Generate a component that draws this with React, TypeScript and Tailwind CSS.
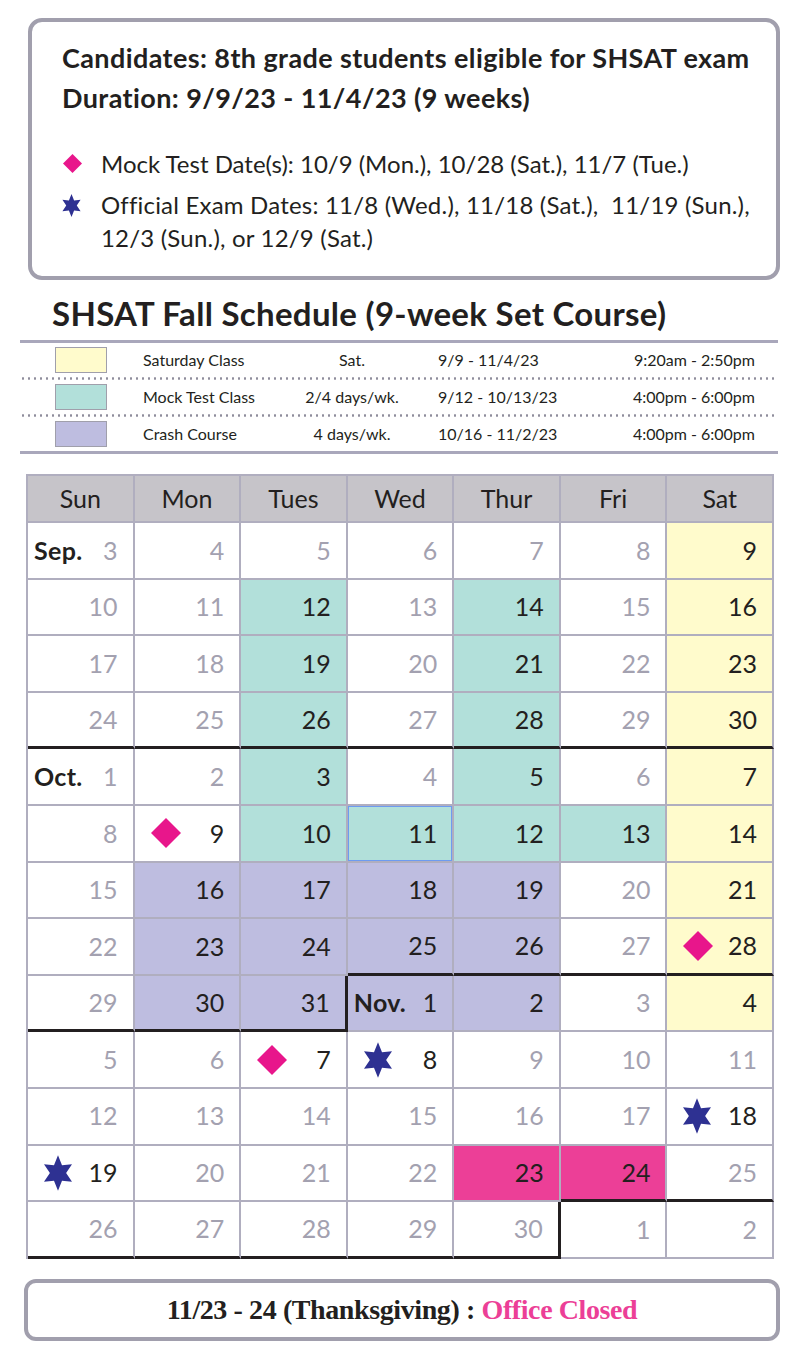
type Cell = {
  n: number;
  bg?: "y" | "t" | "l" | "p";
  dark?: boolean;
  icon?: "d" | "s";
  label?: string;
  b?: boolean;
  r?: boolean;
  blue?: boolean;
};

const bgs = {
  y: "bg-[#fffbcc]",
  t: "bg-[#b2e0da]",
  l: "bg-[#bebde0]",
  p: "bg-[#ec3f97]",
};

const rows: Cell[][] = [
  [{ n: 3, label: "Sep." }, { n: 4 }, { n: 5 }, { n: 6 }, { n: 7 }, { n: 8 }, { n: 9, bg: "y", dark: true }],
  [{ n: 10 }, { n: 11 }, { n: 12, bg: "t", dark: true }, { n: 13 }, { n: 14, bg: "t", dark: true }, { n: 15 }, { n: 16, bg: "y", dark: true }],
  [{ n: 17 }, { n: 18 }, { n: 19, bg: "t", dark: true }, { n: 20 }, { n: 21, bg: "t", dark: true }, { n: 22 }, { n: 23, bg: "y", dark: true }],
  [
    { n: 24, b: true },
    { n: 25, b: true },
    { n: 26, bg: "t", dark: true, b: true },
    { n: 27, b: true },
    { n: 28, bg: "t", dark: true, b: true },
    { n: 29, b: true },
    { n: 30, bg: "y", dark: true, b: true },
  ],
  [{ n: 1, label: "Oct." }, { n: 2 }, { n: 3, bg: "t", dark: true }, { n: 4 }, { n: 5, bg: "t", dark: true }, { n: 6 }, { n: 7, bg: "y", dark: true }],
  [
    { n: 8 },
    { n: 9, dark: true, icon: "d" },
    { n: 10, bg: "t", dark: true },
    { n: 11, bg: "t", dark: true, blue: true },
    { n: 12, bg: "t", dark: true },
    { n: 13, bg: "t", dark: true },
    { n: 14, bg: "y", dark: true },
  ],
  [{ n: 15 }, { n: 16, bg: "l", dark: true }, { n: 17, bg: "l", dark: true }, { n: 18, bg: "l", dark: true }, { n: 19, bg: "l", dark: true }, { n: 20 }, { n: 21, bg: "y", dark: true }],
  [
    { n: 22 },
    { n: 23, bg: "l", dark: true },
    { n: 24, bg: "l", dark: true },
    { n: 25, bg: "l", dark: true, b: true },
    { n: 26, bg: "l", dark: true, b: true },
    { n: 27, b: true },
    { n: 28, bg: "y", dark: true, icon: "d", b: true },
  ],
  [
    { n: 29, b: true },
    { n: 30, bg: "l", dark: true, b: true },
    { n: 31, bg: "l", dark: true, b: true, r: true },
    { n: 1, bg: "l", dark: true, label: "Nov." },
    { n: 2, bg: "l", dark: true },
    { n: 3 },
    { n: 4, bg: "y", dark: true },
  ],
  [{ n: 5 }, { n: 6 }, { n: 7, dark: true, icon: "d" }, { n: 8, dark: true, icon: "s" }, { n: 9 }, { n: 10 }, { n: 11 }],
  [{ n: 12 }, { n: 13 }, { n: 14 }, { n: 15 }, { n: 16 }, { n: 17 }, { n: 18, dark: true, icon: "s" }],
  [
    { n: 19, dark: true, icon: "s" },
    { n: 20 },
    { n: 21 },
    { n: 22 },
    { n: 23, bg: "p", dark: true },
    { n: 24, bg: "p", dark: true, b: true },
    { n: 25, b: true },
  ],
  [
    { n: 26, b: true },
    { n: 27, b: true },
    { n: 28, b: true },
    { n: 29, b: true },
    { n: 30, b: true, r: true },
    { n: 1 },
    { n: 2 },
  ],
];

const Diamond = ({ size = 30 }: { size?: number }) => (
  <svg width={size} height={size} viewBox="0 0 30 30">
    <polygon points="15,0 30,15 15,30 0,15" fill="#e8168b" />
  </svg>
);

// six point star, a bit taller than wide
const Star = ({ w = 28, h = 36 }: { w?: number; h?: number }) => (
  <svg width={w} height={h} viewBox="0 0 30 38">
    <polygon
      points="15,0 19.3,10.8 30,9.5 23.7,19 30,28.5 19.3,27.2 15,38 10.7,27.2 0,28.5 6.3,19 0,9.5 10.7,10.8"
      fill="#2e3192"
    />
  </svg>
);

const legend = [
  { color: "bg-[#fffbcc]", name: "Saturday Class", freq: "Sat.", dates: "9/9 - 11/4/23", time: "9:20am - 2:50pm" },
  { color: "bg-[#b2e0da]", name: "Mock Test Class", freq: "2/4 days/wk.", dates: "9/12 - 10/13/23", time: "4:00pm - 6:00pm" },
  { color: "bg-[#bebde0]", name: "Crash Course", freq: "4 days/wk.", dates: "10/16 - 11/2/23", time: "4:00pm - 6:00pm" },
];

export default function App() {
  return (
    <div className="w-[800px] h-[1352px] bg-white text-[#231f20] font-['Lato',sans-serif] pt-[18px]">
      {/* info box */}
      <div className="ml-[28px] w-[752px] h-[262px] border-4 border-[#a19fad] rounded-[14px] pl-[30px] pt-[16px]">
        <div className="text-[27px] font-bold leading-[40px] tracking-[0.4px]">
          Candidates: 8th grade students eligible for SHSAT exam
        </div>
        <div className="text-[27px] font-bold leading-[40px] tracking-[0.4px]">Duration: 9/9/23 - 11/4/23 (9 weeks)</div>
        <div className="mt-[29px] flex flex-col gap-[8px] text-[24px] leading-[33px]">
          <div className="flex">
            <div className="w-[39px] flex items-center pl-[1px]">
              <Diamond size={19} />
            </div>
            <div>Mock Test Date(s): 10/9 (Mon.), 10/28 (Sat.), 11/7 (Tue.)</div>
          </div>
          <div className="flex">
            <div className="w-[39px] pt-[6px]">
              <Star w={19} h={23} />
            </div>
            <div className="tracking-[0.2px]">
              Official Exam Dates: 11/8 (Wed.), 11/18 (Sat.),&nbsp; 11/19 (Sun.),
              <br />
              12/3 (Sun.), or 12/9 (Sat.)
            </div>
          </div>
        </div>
      </div>

      {/* title */}
      <div className="mt-[14px] pl-[52px] text-[33px] font-bold leading-[38px] tracking-[0.3px]">
        SHSAT Fall Schedule (9-week Set Course)
      </div>

      {/* legend */}
      <div className="mt-[8px] ml-[20px] w-[758px] border-t-[3px] border-b-[3px] border-[#a9a7bb] text-[16px] whitespace-nowrap">
        {legend.map((l, i) => (
          <div key={l.name}>
            {i > 0 && (
              <div className="h-[3px] bg-[radial-gradient(circle,#8f8d9c_1px,transparent_1.4px)] bg-[length:6px_3px]" />
            )}
            <div className="flex items-center h-[34px]">
              <div className={`shrink-0 ml-[35px] w-[52px] h-[26px] border border-[#a09fab] ${l.color}`} />
              <div className="ml-[36px] w-[160px]">{l.name}</div>
              <div className="w-[98px] text-center">{l.freq}</div>
              <div className="ml-[37px] w-[187px]">{l.dates}</div>
              <div className="w-[130px] text-right">{l.time}</div>
            </div>
          </div>
        ))}
      </div>

      {/* calendar */}
      <div className="mt-[20px] ml-[26px] w-[748px] border-l-2 border-t-2 border-[#b0aebf]">
        <div className="grid grid-cols-7 bg-[#c6c4c9]">
          {["Sun", "Mon", "Tues", "Wed", "Thur", "Fri", "Sat"].map((d) => (
            <div
              key={d}
              className="h-[47px] flex items-center justify-center border-r-2 border-b-2 border-[#b0aebf] text-[25px]"
            >
              {d}
            </div>
          ))}
        </div>
        {rows.map((row, ri) => (
          <div key={ri} className="grid grid-cols-7">
            {row.map((c, ci) => (
              <div
                key={ci}
                className={`h-[56.6px] flex items-center border-r-2 border-b-2 border-[#b0aebf] pr-[15px] text-[25px] ${
                  c.bg ? bgs[c.bg] : "bg-white"
                } ${c.dark ? "text-[#231f20]" : "text-[#a3a1b0]"} ${
                  c.b ? "border-b-[3px] border-b-[#231f20]" : ""
                } ${c.r ? "border-r-[3px] border-r-[#231f20]" : ""} ${
                  c.blue ? "shadow-[inset_0_0_0_1px_#6d9bf1]" : ""
                } ${c.label || c.icon ? "justify-between" : "justify-end"} ${
                  c.label ? "pl-[6px]" : c.icon ? "pl-[16px]" : ""
                }`}
              >
                {c.label && <span className="text-[25px] font-bold text-[#231f20] tracking-[0.3px]">{c.label}</span>}
                {c.icon === "d" && <Diamond />}
                {c.icon === "s" && <Star />}
                <span>{c.n}</span>
              </div>
            ))}
          </div>
        ))}
      </div>

      {/* closed notice */}
      <div className="mt-[20px] ml-[24px] w-[756px] h-[62px] border-4 border-[#a19fad] rounded-[12px] flex items-center justify-center font-['Liberation_Serif',serif] font-bold text-[28px] tracking-[-0.4px]">
        <span>11/23 - 24 (Thanksgiving) :&nbsp;</span>
        <span className="text-[#ec3f97]">Office Closed</span>
      </div>
    </div>
  );
}
